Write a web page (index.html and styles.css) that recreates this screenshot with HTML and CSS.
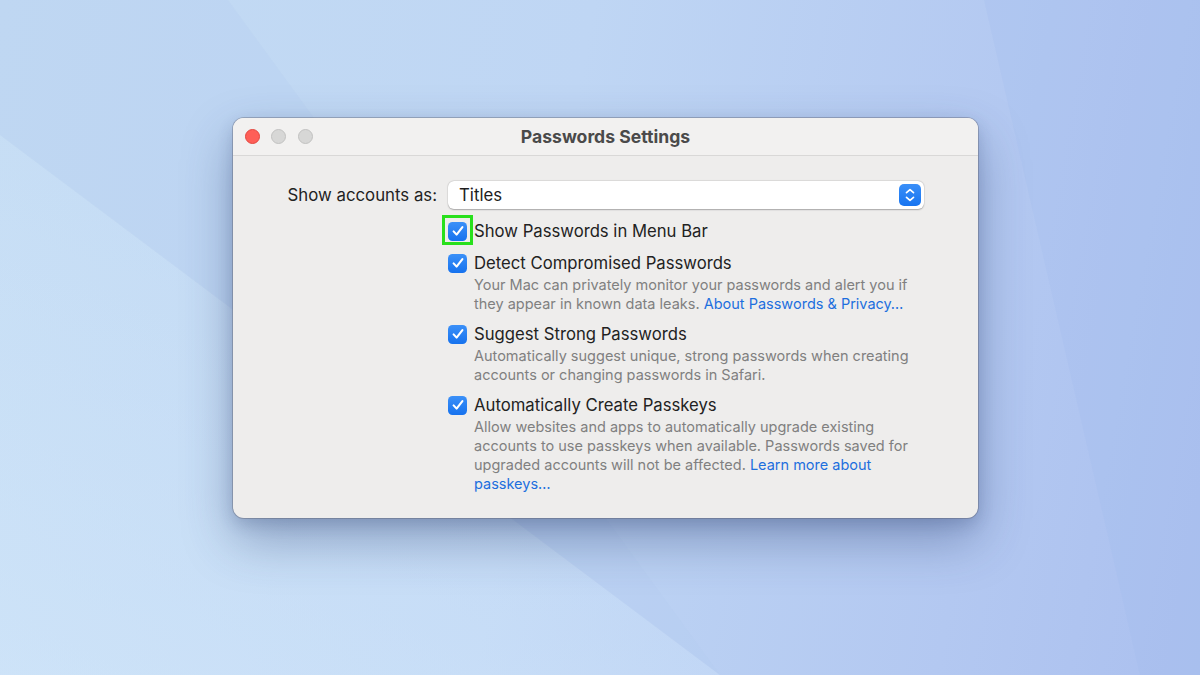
FILE: index.html
```html
<!DOCTYPE html>
<html lang="en">
<head>
<meta charset="utf-8">
<title>Passwords Settings</title>
<link rel="stylesheet" href="styles.css">
</head>
<body>
<div class="desktop">
  <div class="facet facet-a"></div>
  <div class="facet facet-b"></div>
  <div class="facet facet-c"></div>
  <div class="window">
    <div class="titlebar">
      <div class="lights">
        <span class="light close"></span>
        <span class="light"></span>
        <span class="light"></span>
      </div>
      <div class="title">Passwords Settings</div>
      <div></div>
    </div>
    <div class="content">
      <div class="field-label">Show accounts as:</div>
      <div class="popup">
        <span class="popup-value">Titles</span>
        <span class="stepper">
          <svg width="22" height="22" viewBox="0 0 22 22"><path d="M7.5 8.6 L11 5.6 L14.5 8.6" fill="none" stroke="#fff" stroke-width="1.7" stroke-linecap="round" stroke-linejoin="round"/><path d="M7.5 13.4 L11 16.4 L14.5 13.4" fill="none" stroke="#fff" stroke-width="1.7" stroke-linecap="round" stroke-linejoin="round"/></svg>
        </span>
      </div>
      <div class="options">
        <div class="option">
          <span class="checkbox">
            <svg width="18" height="18" viewBox="0 0 18 18"><path d="M4.6 9.4 L7.6 12.6 L13.4 5.2" fill="none" stroke="#fff" stroke-width="2.1" stroke-linecap="round" stroke-linejoin="round"/></svg>
            <span class="highlight"></span>
          </span>
          <div class="option-text">
            <div class="option-title">Show Passwords in Menu Bar</div>
          </div>
        </div>
        <div class="option">
          <span class="checkbox">
            <svg width="18" height="18" viewBox="0 0 18 18"><path d="M4.6 9.4 L7.6 12.6 L13.4 5.2" fill="none" stroke="#fff" stroke-width="2.1" stroke-linecap="round" stroke-linejoin="round"/></svg>
          </span>
          <div class="option-text">
            <div class="option-title">Detect Compromised Passwords</div>
            <div class="option-desc">Your Mac can privately monitor your passwords and alert you if they appear in known data leaks. <a class="link">About Passwords &amp; Privacy…</a></div>
          </div>
        </div>
        <div class="option">
          <span class="checkbox">
            <svg width="18" height="18" viewBox="0 0 18 18"><path d="M4.6 9.4 L7.6 12.6 L13.4 5.2" fill="none" stroke="#fff" stroke-width="2.1" stroke-linecap="round" stroke-linejoin="round"/></svg>
          </span>
          <div class="option-text">
            <div class="option-title">Suggest Strong Passwords</div>
            <div class="option-desc">Automatically suggest unique, strong passwords when creating accounts or changing passwords in Safari.</div>
          </div>
        </div>
        <div class="option">
          <span class="checkbox">
            <svg width="18" height="18" viewBox="0 0 18 18"><path d="M4.6 9.4 L7.6 12.6 L13.4 5.2" fill="none" stroke="#fff" stroke-width="2.1" stroke-linecap="round" stroke-linejoin="round"/></svg>
          </span>
          <div class="option-text">
            <div class="option-title">Automatically Create Passkeys</div>
            <div class="option-desc">Allow websites and apps to automatically upgrade existing accounts to use passkeys when available. Passwords saved for upgraded accounts will not be affected. <a class="link">Learn more about passkeys…</a></div>
          </div>
        </div>
      </div>
    </div>
  </div>
</div>
</body>
</html>
```

FILE: styles.css
```css
html, body {
  margin: 0;
  padding: 0;
}

body {
  width: 1200px;
  height: 675px;
  overflow: hidden;
  font-family: Inter, "Liberation Sans", Arial, sans-serif;
}

.desktop {
  position: relative;
  width: 1200px;
  height: 675px;
  box-sizing: border-box;
  padding: 118px 0 0 233px;
  background: linear-gradient(100deg, #c3dbf3 0%, #bfd6f4 45%, #b3c8f1 80%, #abc0ef 100%);
  overflow: hidden;
}

.facet {
  position: absolute;
  inset: 0;
  pointer-events: none;
}

.facet-a {
  background: linear-gradient(28deg, rgba(214, 234, 252, 0.55) 0%, rgba(214, 234, 252, 0.2) 40%, rgba(214, 234, 252, 0) 60%);
  clip-path: polygon(0 20%, 60% 100%, 0 100%);
}

.facet-b {
  background: rgba(180, 205, 240, 0.25);
  clip-path: polygon(0 0, 19% 0, 60% 100%, 0 20%);
}

.facet-c {
  background: rgba(160, 185, 238, 0.22);
  clip-path: polygon(82% 0, 100% 0, 100% 100%, 95% 100%);
}

.window {
  position: relative;
  width: 745px;
  height: 400px;
  border-radius: 11px;
  background: #eeedec;
  box-shadow: 0 0 0 1px rgba(90, 90, 100, 0.35), 0 22px 50px rgba(40, 60, 110, 0.38), 0 6px 16px rgba(40, 60, 110, 0.2);
  overflow: hidden;
}

.titlebar {
  height: 37px;
  display: grid;
  grid-template-columns: 1fr auto 1fr;
  align-items: center;
  background: #f2f1f0;
  border-bottom: 1px solid #d9d8d7;
}

.lights {
  display: flex;
  gap: 11.5px;
  padding-left: 11.5px;
}

.light {
  width: 15px;
  height: 15px;
  box-sizing: border-box;
  border-radius: 50%;
  background: #d7d7d6;
  border: 0.5px solid #c2c2c1;
}

.light.close {
  background: #fe5f57;
  border-color: #e2463f;
}

.title {
  font-size: 17.6px;
  font-weight: 700;
  color: #4a4a4a;
}

.content {
  display: grid;
  grid-template-columns: 204px 476px;
  column-gap: 11px;
  row-gap: 11px;
  padding-top: 25px;
  align-items: center;
}

.field-label {
  text-align: right;
  font-size: 16.8px;
  color: #222;
}

.popup {
  height: 28px;
  box-sizing: border-box;
  display: flex;
  align-items: center;
  justify-content: space-between;
  padding: 0 3px 0 11px;
  background: #fff;
  border-radius: 6px;
  box-shadow: 0 0.5px 1.5px rgba(0, 0, 0, 0.28), 0 0 0 0.5px rgba(0, 0, 0, 0.06);
}

.popup-value {
  font-size: 16.8px;
  color: #1d1d1d;
}

.stepper {
  width: 22px;
  height: 22px;
  border-radius: 5px;
  background: linear-gradient(#3a8ff8, #1774f0);
  display: flex;
}

.options {
  grid-column: 2;
  display: flex;
  flex-direction: column;
  gap: 10px;
}

.option {
  display: flex;
  gap: 7px;
  align-items: flex-start;
}

.checkbox {
  position: relative;
  flex: none;
  width: 19px;
  height: 19px;
  margin-top: 1.5px;
  border-radius: 4.5px;
  background: linear-gradient(#3b90f8, #1672ee);
  display: flex;
  align-items: center;
  justify-content: center;
}

.highlight {
  position: absolute;
  left: -6.5px;
  top: -6.5px;
  width: 31px;
  height: 30px;
  box-sizing: border-box;
  border: 3px solid #28e01c;
}

.option-text {
  flex: 1;
}

.option-title {
  font-size: 16.7px;
  line-height: 22px;
  color: #222;
}

.option-desc {
  margin-top: 1px;
  font-size: 14.5px;
  line-height: 19px;
  color: #808080;
  padding-right: 6px;
}

.link {
  color: #1d6fde;
}
```
